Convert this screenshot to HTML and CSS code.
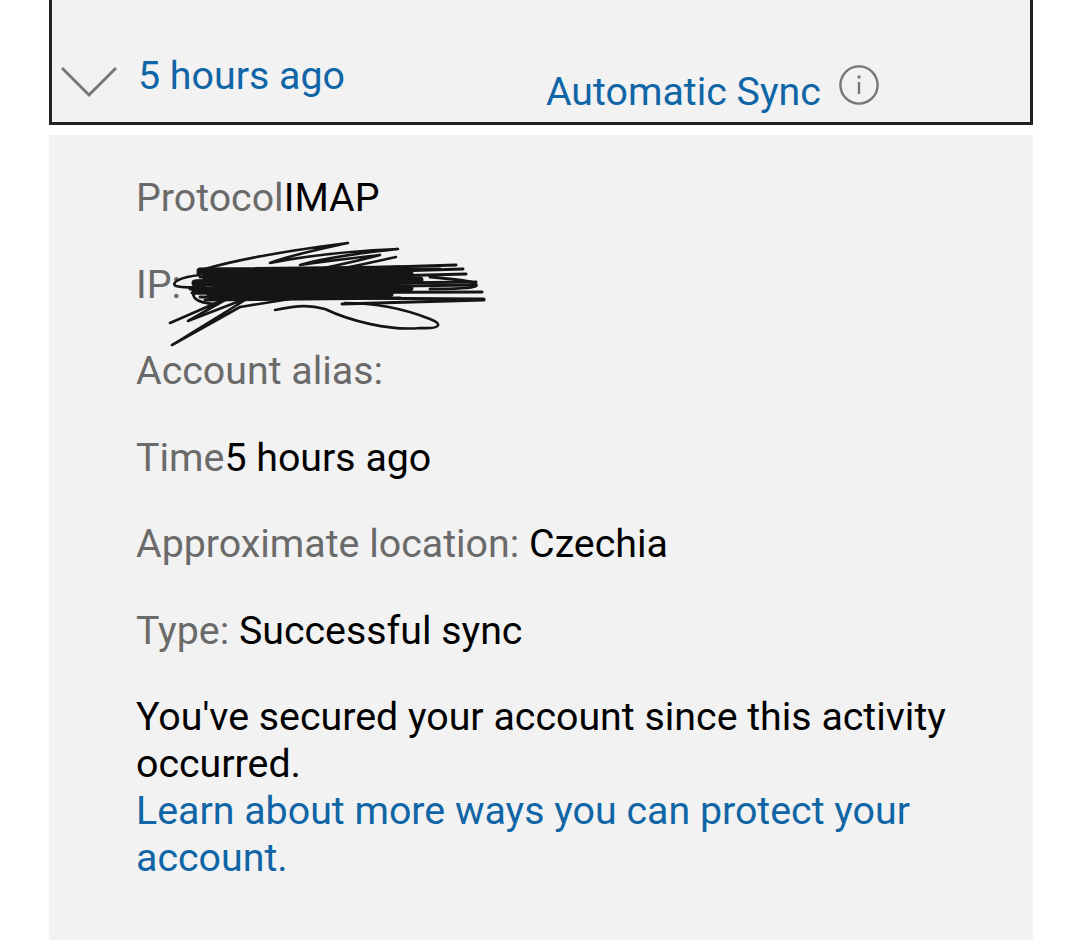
FILE: index.html
```html
<!DOCTYPE html>
<html lang="en">
<head>
    <meta charset="UTF-8">
    <meta name="viewport" content="width=device-width, initial-scale=1.0">
    <title>Recent activity</title>
    <link rel="stylesheet" href="styles.css">
</head>
<body>

    <div class="page">
        <!-- Collapsed activity header -->
        <div class="activity-head">
            <svg class="chevron" width="56" height="32" viewBox="0 0 56 32" aria-hidden="true">
                <path d="M1 2 L28 29 L55 2" fill="none" stroke="#777" stroke-width="3"/>
            </svg>
            <span class="head-time">5 hours ago</span>
            <span class="head-type">Automatic Sync</span>
            <svg class="info" width="40" height="40" viewBox="0 0 40 40" aria-hidden="true">
                <circle cx="20" cy="20" r="18.6" fill="none" stroke="#777" stroke-width="2.4"/>
                <circle cx="20" cy="12" r="1.7" fill="#777"/>
                <path d="M20 17 V29" fill="none" stroke="#777" stroke-width="2.4"/>
            </svg>
        </div>

        <!-- Activity details -->
        <div class="details">
            <p class="row"><span class="label">Protocol</span>IMAP</p>
            <p class="row ip-row">
                <span class="label">IP:</span>
                <svg class="scribble" width="330" height="115" viewBox="160 235 330 115" aria-hidden="true">
                    <g fill="none" stroke="#151515" stroke-linecap="round" stroke-linejoin="round">
                        <g stroke-width="2.6">
                            <path d="M170 322 L232 295 L188 320 L250 296 L172 344 L240 306 L290 298"/>
                            <path d="M205 268 C240 258 300 248 348 242 C330 246 290 254 270 262 C310 254 350 250 398 248 C360 252 320 258 300 264 C330 260 360 256 380 254 C350 262 320 268 300 272"/>
                            <path d="M396 256 C370 262 340 268 320 272"/>
                            <path d="M200 274 C180 276 170 282 176 285 C186 288 196 286 205 285"/>
                            <path d="M195 288 C190 296 196 302 215 303"/>
                            <path d="M275 309 C300 304 310 304 325 308 C350 320 390 330 420 327 C445 328 440 322 430 318 C400 306 370 302 345 302"/>
                        </g>
                        <g stroke-width="3">
                            <path d="M198 272 L456 264"/>
                            <path d="M200 276 L463 268"/>
                            <path d="M196 280 L466 273"/>
                            <path d="M198 284 L476 281"/>
                            <path d="M190 288 L474 284"/>
                            <path d="M192 292 L482 291"/>
                            <path d="M200 296 L484 298"/>
                            <path d="M205 299 L400 297"/>
                            <path d="M342 303 L484 299"/>
                            <path d="M210 269 L440 268"/>
                            <path d="M430 276 C450 278 480 280 476 285 C470 288 450 288 430 288"/>
                        </g>
                        <path d="M200 270 L400 268 L205 275 L410 273 L195 282 L420 279 L195 290 L410 287 L210 295 L390 293" stroke-width="7"/>
                    </g>
                </svg>
            </p>
            <p class="row"><span class="label">Account alias:</span></p>
            <p class="row"><span class="label">Time</span>5 hours ago</p>
            <p class="row"><span class="label">Approximate location:</span> Czechia</p>
            <p class="row"><span class="label">Type:</span> Successful sync</p>
            <p class="note">You've secured your account since this activity occurred.<br>
                <a href="#">Learn about more ways you can protect your account.</a></p>
        </div>
    </div>

</body>
</html>
```

FILE: styles.css
```css
/* General reset */
* {
    margin: 0;
    padding: 0;
    box-sizing: border-box;
}

body {
    background-color: #FFF;
    color: #000;
    font-family: Roboto, "Liberation Sans", sans-serif;
    font-size: 39.35px;
    line-height: 47px;
    overflow: hidden;
}

.page {
    width: 984px;
    height: 940px;
    margin-left: 49px;
}

/* Collapsed header */
.activity-head {
    display: flex;
    align-items: flex-start;
    height: 125px;
    padding: 53px 0 0 9px;
    background-color: #F2F2F2;
    border: 3px solid #222;
    border-top: none;
    color: #0F65A5;
}

.chevron {
    margin: 13px 0 0 0;
    flex-shrink: 0;
}

.head-time {
    margin-left: 21px;
}

.head-type {
    margin: 16px 0 0 201px;
}

.info {
    margin: 12px 0 0 18px;
    flex-shrink: 0;
}

/* Details panel */
.details {
    height: 805px;
    margin-top: 10px;
    padding: 40px 80px 0 87px;
    background-color: #F2F2F2;
}

.row {
    height: 47px;
    margin-bottom: 39.5px;
    white-space: nowrap;
}

.ip-row {
    position: relative;
}

.label {
    color: #6A6A6A;
}

.scribble {
    position: absolute;
    left: 24px;
    top: -26px;
}

.note a {
    color: #0F65A5;
    text-decoration: none;
}
```
